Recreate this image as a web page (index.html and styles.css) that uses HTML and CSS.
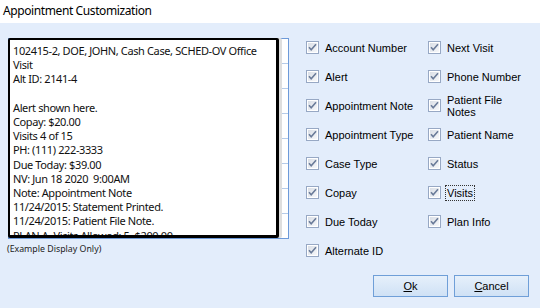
FILE: index.html
```html
<!DOCTYPE html>
<html>
<head>
<meta charset="utf-8">
<link rel="stylesheet" href="styles.css">
</head>
<body>
<div class="titlebar">Appointment Customization</div>
<div class="main">
  <div class="left">
    <div class="preview">
      <div class="grid">
        <div class="row"></div><div class="row"></div><div class="row"></div><div class="row"></div>
        <div class="row"></div><div class="row"></div><div class="row"></div><div class="row"></div>
      </div>
      <div class="tip">
        <div class="tip-text">
          <div>102415-2, DOE, JOHN, Cash Case, SCHED-OV Office Visit</div>
          <div>Alt ID: 2141-4</div>
          <div class="blank"></div>
          <div>Alert shown here.</div>
          <div>Copay: $20.00</div>
          <div>Visits 4 of 15</div>
          <div>PH: (111) 222-3333</div>
          <div>Due Today: $39.00</div>
          <div>NV: Jun 18 2020&nbsp; 9:00AM</div>
          <div>Note: Appointment Note</div>
          <div>11/24/2015: Statement Printed.</div>
          <div>11/24/2015: Patient File Note.</div>
          <div>PLAN A, Visits Allowed: 5, $200.00</div>
        </div>
      </div>
    </div>
    <div class="caption">(Example Display Only)</div>
  </div>
  <div class="checks">
    <label class="chk"><svg class="box" viewBox="0 0 13 13"><use href="#cb"/></svg><span>Account Number</span></label>
    <label class="chk"><svg class="box" viewBox="0 0 13 13"><use href="#cb"/></svg><span>Alert</span></label>
    <label class="chk"><svg class="box" viewBox="0 0 13 13"><use href="#cb"/></svg><span>Appointment Note</span></label>
    <label class="chk"><svg class="box" viewBox="0 0 13 13"><use href="#cb"/></svg><span>Appointment Type</span></label>
    <label class="chk"><svg class="box" viewBox="0 0 13 13"><use href="#cb"/></svg><span>Case Type</span></label>
    <label class="chk"><svg class="box" viewBox="0 0 13 13"><use href="#cb"/></svg><span>Copay</span></label>
    <label class="chk"><svg class="box" viewBox="0 0 13 13"><use href="#cb"/></svg><span>Due Today</span></label>
    <label class="chk"><svg class="box" viewBox="0 0 13 13"><use href="#cb"/></svg><span>Alternate ID</span></label>
    <label class="chk"><svg class="box" viewBox="0 0 13 13"><use href="#cb"/></svg><span>Next Visit</span></label>
    <label class="chk"><svg class="box" viewBox="0 0 13 13"><use href="#cb"/></svg><span>Phone Number</span></label>
    <label class="chk"><svg class="box" viewBox="0 0 13 13"><use href="#cb"/></svg><span class="wrap">Patient File Notes</span></label>
    <label class="chk"><svg class="box" viewBox="0 0 13 13"><use href="#cb"/></svg><span>Patient Name</span></label>
    <label class="chk"><svg class="box" viewBox="0 0 13 13"><use href="#cb"/></svg><span>Status</span></label>
    <label class="chk"><svg class="box" viewBox="0 0 13 13"><use href="#cb"/></svg><span class="focus">Visits</span></label>
    <label class="chk"><svg class="box" viewBox="0 0 13 13"><use href="#cb"/></svg><span>Plan Info</span></label>
  </div>
</div>
<div class="footer">
  <button class="btn"><u>O</u>k</button>
  <button class="btn"><u>C</u>ancel</button>
</div>
<svg width="0" height="0" class="defs">
  <defs>
    <linearGradient id="cbg" x1="0" y1="0" x2="1" y2="1">
      <stop offset="0" stop-color="#d9dee6"/>
      <stop offset="1" stop-color="#f7f8fa"/>
    </linearGradient>
    <g id="cb">
      <rect x="0.5" y="0.5" width="12" height="12" fill="#ffffff" stroke="#97a8c4"/>
      <rect x="2" y="2" width="9" height="9" fill="url(#cbg)"/>
      <path d="M3 6.2 L5.2 8.8 L10 3.3" fill="none" stroke="#6a7b99" stroke-width="1.6"/>
    </g>
  </defs>
</svg>
</body>
</html>
```
FILE: styles.css
```css
html, body {
  margin: 0;
  padding: 0;
}
body {
  width: 540px;
  height: 308px;
  overflow: hidden;
  background: #e3edfb;
  font-family: "Liberation Sans", Arial, sans-serif;
  font-size: 11px;
  color: #000;
}
.defs {
  position: absolute;
}
.titlebar {
  height: 23px;
  background: #ffffff;
  padding-left: 3px;
  font-family: "Noto Sans", "Open Sans", sans-serif;
  font-size: 12px;
  letter-spacing: -0.4px;
  line-height: 21px;
  color: #000;
  box-sizing: border-box;
}
.main {
  display: flex;
}
.left {
  padding: 15px 0 0 8px;
}
.preview {
  position: relative;
  width: 281px;
  height: 201px;
}
.grid {
  box-sizing: border-box;
  width: 281px;
  height: 201px;
  border: 1px solid #6d9ad9;
  border-bottom: none;
  background: #ffffff;
}
.row {
  height: 24px;
  border-bottom: 1px solid #b6cbe8;
}
.row:last-child {
  border-bottom-color: #6d9ad9;
}
.tip {
  position: absolute;
  left: 0;
  top: 0;
  box-sizing: border-box;
  width: 271px;
  height: 200px;
  background: #ffffff;
  border: 2px solid #000;
  border-right-width: 3px;
  border-bottom-width: 3px;
  border-radius: 2px;
  box-shadow: 3px 0 0 #dedede;
  overflow: hidden;
}
.tip-text {
  padding: 4px 2px 0 3px;
  font-family: "Noto Sans", "Open Sans", sans-serif;
  font-size: 11px;
  letter-spacing: -0.38px;
  line-height: 14.2px;
  color: #111;
}
.blank {
  height: 14.2px;
}
.caption {
  margin-top: 5px;
  margin-left: -1px;
  font-family: "Noto Sans", sans-serif;
  font-size: 8.8px;
  line-height: 11px;
  color: #222;
}
.checks {
  margin-left: 17px;
  padding-top: 10px;
  display: grid;
  grid-auto-flow: column;
  grid-template-rows: repeat(8, 29px);
  grid-template-columns: 122px 100px;
}
.chk {
  display: flex;
  align-items: center;
  gap: 6px;
}
.box {
  width: 13px;
  height: 13px;
  flex: none;
}
.chk span {
  line-height: 12px;
}
.wrap {
  max-width: 80px;
}
.focus {
  outline: 1px dotted #333;
  outline-offset: 1px;
}
.footer {
  display: flex;
  justify-content: flex-end;
  gap: 6px;
  padding: 10px 11px 0 0;
}
.btn {
  width: 75px;
  height: 22px;
  border: 1px solid #6f9fd8;
  background: linear-gradient(#e6f0fb, #cfe1f5);
  font-family: "Liberation Sans", Arial, sans-serif;
  font-size: 11px;
  color: #000;
  padding: 0;
}
```
